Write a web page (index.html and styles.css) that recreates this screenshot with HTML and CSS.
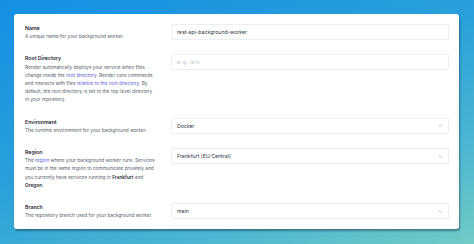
FILE: index.html
```html
<!DOCTYPE html>
<html>
<head>
<meta charset="utf-8">
<link rel="stylesheet" href="styles.css">
</head>
<body>
<div class="card">
  <div class="row">
    <div class="info">
      <div class="label">Name</div>
      <div class="desc">A unique name for your background worker.</div>
    </div>
    <div class="field"><span class="value">rest-api-background-worker</span></div>
  </div>
  <div class="row">
    <div class="info">
      <div class="label">Root Directory</div>
      <div class="desc">Render automatically deploys your service when files<br>change inside the <a class="link">root directory</a>. Render runs commands<br>and interacts with files <a class="link">relative to the root directory</a>. By<br>default, the root directory is set to the top-level directory<br>in your repository.</div>
    </div>
    <div class="field"><span class="placeholder">e.g. src</span></div>
  </div>
  <div class="row">
    <div class="info">
      <div class="label">Environment</div>
      <div class="desc">The runtime environment for your background worker.</div>
    </div>
    <div class="field select"><span class="value">Docker</span><svg class="chev" viewBox="0 0 8 5" width="5" height="3"><path d="M1 1 L4 4 L7 1" fill="none" stroke="#9a9ea6" stroke-width="1"/></svg></div>
  </div>
  <div class="row">
    <div class="info">
      <div class="label">Region</div>
      <div class="desc">The <a class="link">region</a> where your background worker runs. Services<br>must be in the same region to communicate privately and<br>you currently have services running in <b>Frankfurt</b> and<br><b>Oregon</b>.</div>
    </div>
    <div class="field select"><span class="value">Frankfurt (EU Central)</span><svg class="chev" viewBox="0 0 8 5" width="5" height="3"><path d="M1 1 L4 4 L7 1" fill="none" stroke="#9a9ea6" stroke-width="1"/></svg></div>
  </div>
  <div class="row">
    <div class="info">
      <div class="label">Branch</div>
      <div class="desc">The repository branch used for your background worker.</div>
    </div>
    <div class="field select"><span class="value">main</span><svg class="chev" viewBox="0 0 8 5" width="5" height="3"><path d="M1 1 L4 4 L7 1" fill="none" stroke="#9a9ea6" stroke-width="1"/></svg></div>
  </div>
</div>
</body>
</html>
```
FILE: styles.css
```css
html, body {
  margin: 0;
  padding: 0;
}
body {
  width: 474px;
  height: 244px;
  box-sizing: border-box;
  padding: 14px 15px 15px 14px;
  background: linear-gradient(160deg, #1590e4 0%, #2aa0da 45%, #4ab6d2 75%, #72cbc4 100%);
  font-family: Inter, "Noto Sans", sans-serif;
  overflow: hidden;
}
.card {
  background: #fff;
  border-radius: 3px;
  box-shadow: 1px 2px 2px rgba(20, 40, 60, 0.45);
  height: 215px;
  box-sizing: border-box;
  padding: 10px 10px 10px 11px;
  display: flex;
  flex-direction: column;
  gap: 14px;
}
.row {
  display: grid;
  grid-template-columns: 146px 1fr;
  align-items: start;
}
.info {
  width: 140px;
}
.label {
  font-size: 5.2px;
  line-height: 8.2px;
  font-weight: 600;
  color: #1d2130;
}
.desc {
  font-size: 4.8px;
  line-height: 8.2px;
  color: #5a5f6e;
  letter-spacing: -0.02px;
  white-space: nowrap;
}
.desc b {
  font-weight: 600;
  color: #2a2e3a;
}
.link {
  color: #5b5fd8;
}
.field {
  height: 16px;
  box-sizing: border-box;
  border: 1px solid #eceef1;
  border-radius: 2px;
  display: flex;
  align-items: center;
  justify-content: space-between;
  padding: 0 5px 0 5px;
  font-size: 5.2px;
}
.value {
  color: #30343f;
}
.placeholder {
  color: #b9bcc4;
  letter-spacing: 0.6px;
}
.chev {
  display: block;
}
```
